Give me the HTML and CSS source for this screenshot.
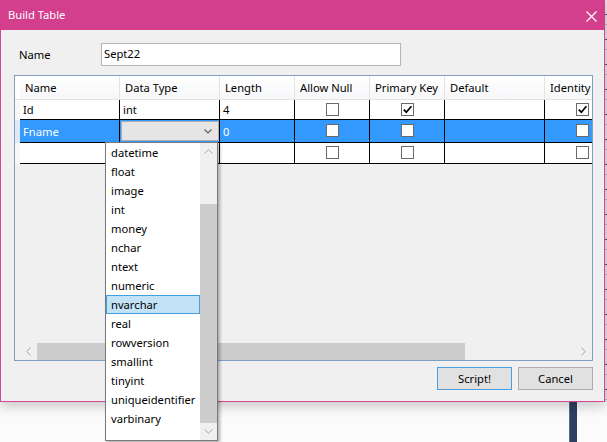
FILE: index.html
```html
<!DOCTYPE html>
<html>
<head>
<meta charset="utf-8">
<title>Build Table</title>
<link rel="stylesheet" href="styles.css">
</head>
<body>
<div class="screen">
  <div class="top">
    <div class="window">
      <div class="titlebar">
        <span class="title">Build Table</span>
        <svg class="close" width="11" height="11" viewBox="0 0 11 11"><path d="M0.5 0.5 L10.5 10.5 M10.5 0.5 L0.5 10.5" stroke="#fff" stroke-width="1.2" fill="none"/></svg>
      </div>
      <div class="content">
        <div class="name-row">
          <span class="name-label">Name</span>
          <div class="textbox">Sept22</div>
        </div>
        <div class="grid">
          <div class="rows">
            <div class="row hdr">
              <div class="rh"></div>
              <div class="cell w100">Name</div>
              <div class="cell w100">Data Type</div>
              <div class="cell w75">Length</div>
              <div class="cell w75">Allow Null</div>
              <div class="cell w75">Primary Key</div>
              <div class="cell w100">Default</div>
              <div class="cell w75">Identity</div>
            </div>
            <div class="row data r1">
              <div class="rh"></div>
              <div class="cell w100">Id</div>
              <div class="cell w100">int</div>
              <div class="cell w75">4</div>
              <div class="cell w75 ck"><span class="cb"></span></div>
              <div class="cell w75 ck"><span class="cb"><svg width="11" height="11" viewBox="0 0 11 11"><path d="M1.8 5.6 L4.3 8.2 L9.4 2.2" stroke="#000" stroke-width="1.7" fill="none"/></svg></span></div>
              <div class="cell w100"></div>
              <div class="cell w75 ck"><span class="cb"><svg width="11" height="11" viewBox="0 0 11 11"><path d="M1.8 5.6 L4.3 8.2 L9.4 2.2" stroke="#000" stroke-width="1.7" fill="none"/></svg></span></div>
            </div>
            <div class="row data r2 sel">
              <div class="rh"></div>
              <div class="cell w100">Fname</div>
              <div class="cell w100 combo-cell">
                <div class="combo">
                  <svg width="8" height="5" viewBox="0 0 8 5"><path d="M0.5 0.5 L4 4 L7.5 0.5" stroke="#5a5a5a" stroke-width="1.1" fill="none"/></svg>
                </div>
              </div>
              <div class="cell w75">0</div>
              <div class="cell w75 ck"><span class="cb"></span></div>
              <div class="cell w75 ck"><span class="cb"></span></div>
              <div class="cell w100"></div>
              <div class="cell w75 ck"><span class="cb"></span></div>
            </div>
            <div class="row data r3">
              <div class="rh"></div>
              <div class="cell w100"></div>
              <div class="cell w100"></div>
              <div class="cell w75"></div>
              <div class="cell w75 ck"><span class="cb"></span></div>
              <div class="cell w75 ck"><span class="cb"></span></div>
              <div class="cell w100"></div>
              <div class="cell w75 ck"><span class="cb"></span></div>
            </div>
          </div>
          <div class="hscroll">
            <div class="hbtn"><svg width="5" height="9" viewBox="0 0 5 9"><path d="M4.5 0.5 L0.8 4.5 L4.5 8.5" stroke="#a6a6a6" stroke-width="1" fill="none"/></svg></div>
            <div class="htrack"><div class="hthumb"></div></div>
            <div class="hbtn"><svg width="5" height="9" viewBox="0 0 5 9"><path d="M0.5 0.5 L4.2 4.5 L0.5 8.5" stroke="#a6a6a6" stroke-width="1" fill="none"/></svg></div>
          </div>
        </div>
        <div class="buttons">
          <div class="btn default">Script!</div>
          <div class="btn">Cancel</div>
        </div>
      </div>
    </div>
    <div class="edge"></div>
  </div>
  <div class="below">
    <div class="navy"></div>
  </div>

  <div class="dropdown">
    <div class="list">
      <div class="item">datetime</div>
      <div class="item">float</div>
      <div class="item">image</div>
      <div class="item">int</div>
      <div class="item">money</div>
      <div class="item">nchar</div>
      <div class="item">ntext</div>
      <div class="item">numeric</div>
      <div class="item hl">nvarchar</div>
      <div class="item">real</div>
      <div class="item">rowversion</div>
      <div class="item">smallint</div>
      <div class="item">tinyint</div>
      <div class="item">uniqueidentifier</div>
      <div class="item">varbinary</div>
    </div>
    <div class="vscroll">
      <div class="vbtn"><svg width="9" height="5" viewBox="0 0 9 5"><path d="M0.5 4.5 L4.5 0.8 L8.5 4.5" stroke="#a6a6a6" stroke-width="1" fill="none"/></svg></div>
      <div class="vtrack"><div class="vthumb"></div></div>
      <div class="vbtn"><svg width="9" height="5" viewBox="0 0 9 5"><path d="M0.5 0.5 L4.5 4.2 L8.5 0.5" stroke="#a6a6a6" stroke-width="1" fill="none"/></svg></div>
    </div>
  </div>
</div>
</body>
</html>
```

FILE: styles.css
```css
html, body {
  margin: 0;
  padding: 0;
}
body {
  font-family: "Noto Sans", "Open Sans", sans-serif;
  font-size: 11.2px;
  color: #000;
  background: #fbfbfb;
}
.screen {
  position: relative;
  width: 607px;
  height: 442px;
  overflow: hidden;
  background: #fbfbfb;
}
.top {
  display: flex;
  height: 402px;
}
.window {
  width: 605px;
  height: 402px;
  box-sizing: border-box;
  border: 1px solid #d6479a;
  border-top: 0;
  display: flex;
  flex-direction: column;
  box-shadow: 0 4px 12px rgba(0, 0, 0, 0.22);
  position: relative;
  z-index: 1;
  flex: none;
}
.edge {
  width: 2px;
  flex: none;
  background: repeating-linear-gradient(#e6e1e8 0 14px, #5e5570 14px 15px, #e6e1e8 15px 24px, #c9a6c2 24px 25px);
}
.titlebar {
  height: 30px;
  flex: none;
  background: #d33f8d;
  color: #fff;
  display: flex;
  align-items: center;
  justify-content: space-between;
  padding: 0 8px 0 8px;
  margin: 0 -1px;
}
.title {
  font-size: 11.2px;
  line-height: 30px;
}
.close {
  margin-top: 2px;
  display: block;
}
.content {
  flex: 1;
  background: #f0f0f0;
  padding: 13px 11px 11px 13px;
  display: flex;
  flex-direction: column;
}
.name-row {
  display: flex;
  align-items: center;
  height: 23px;
  flex: none;
}
.name-label {
  width: 82px;
  padding-left: 5px;
  line-height: 23px;
}
.textbox {
  width: 300px;
  height: 23px;
  box-sizing: border-box;
  border: 1px solid #b4b4b4;
  background: #fff;
  padding: 0 2px;
  line-height: 19px;
}
.grid {
  margin-top: 9px;
  height: 286px;
  box-sizing: border-box;
  border: 1px solid #7c9fc2;
  background: #f0f0f0;
  display: flex;
  flex-direction: column;
  overflow: hidden;
  flex: none;
}
.rows {
  flex: 1;
  overflow: hidden;
}
.row {
  display: flex;
  box-sizing: border-box;
}
.rh {
  width: 5px;
  flex: none;
}
.cell {
  flex: none;
  box-sizing: border-box;
  white-space: nowrap;
  overflow: hidden;
}
.w100 { width: 100px; }
.w75 { width: 75px; }
.hdr {
  height: 24px;
  background: linear-gradient(#ffffff, #f6f7f9);
  border-bottom: 1px solid #e2e2e2;
}
.hdr .rh {
  background: #ffffff;
}
.hdr .cell {
  border-right: 1px solid #e3e3e3;
  padding-left: 5px;
  line-height: 23px;
}
.data .rh {
  background: #f7f8fa;
}
.data .cell {
  background: #fff;
  border-right: 1px solid #000;
  border-bottom: 1px solid #000;
  padding-left: 3px;
  display: flex;
  align-items: center;
}
.r1 { height: 20px; }
.r2 { height: 23px; }
.r3 { height: 21px; }
.sel .rh {
  background: #dde9f6;
}
.sel .cell {
  background: #3399ff;
  color: #fff;
}
.ck {
  justify-content: center;
  padding-left: 0 !important;
}
.cb {
  width: 13px;
  height: 13px;
  box-sizing: border-box;
  border: 1px solid #6a6a6a;
  background: #fff;
  display: flex;
  align-items: center;
  justify-content: center;
  margin-top: -1px;
}
.cb svg {
  display: block;
}
.combo-cell {
  padding: 0 !important;
  align-items: stretch !important;
}
.combo {
  flex: 1;
  margin: 1px 0 1px 1px;
  box-sizing: border-box;
  border: 1px solid #adadad;
  background: #e5e5e5;
  display: flex;
  align-items: center;
  justify-content: flex-end;
  padding-right: 6px;
}
.combo svg {
  display: block;
}
.hscroll {
  height: 17px;
  flex: none;
  margin-left: 5px;
  display: flex;
}
.hbtn {
  width: 17px;
  flex: none;
  display: flex;
  align-items: center;
  justify-content: center;
}
.htrack {
  flex: 1;
  display: flex;
}
.hthumb {
  width: 428px;
  background: #cdcdcd;
}
.buttons {
  margin-top: 6px;
  display: flex;
  justify-content: flex-end;
  gap: 6px;
  flex: none;
}
.btn {
  width: 75px;
  height: 23px;
  box-sizing: border-box;
  border: 1px solid #adadad;
  background: #e1e1e1;
  display: flex;
  align-items: center;
  justify-content: center;
}
.btn.default {
  border-color: #4a9fe2;
}
.below {
  height: 40px;
  display: flex;
}
.navy {
  margin-left: 569px;
  width: 8px;
  box-sizing: border-box;
  border-left: 1px solid #5a6d8e;
  background: #2d3f5f;
}
.dropdown {
  position: absolute;
  left: 105px;
  top: 142px;
  width: 113px;
  height: 299px;
  box-sizing: border-box;
  border: 1px solid #7a7a7a;
  background: #fff;
  display: flex;
  box-shadow: 2px 2px 3px rgba(0, 0, 0, 0.3);
  z-index: 5;
}
.list {
  width: 94px;
  flex: none;
}
.item {
  height: 19px;
  line-height: 19px;
  padding-left: 5px;
  box-sizing: border-box;
  white-space: nowrap;
}
.item.hl {
  background: #c3e2f6;
  border: 1px solid #3f9fe0;
  padding-left: 4px;
  line-height: 17px;
}
.vscroll {
  width: 17px;
  flex: none;
  background: #f0f0f0;
  display: flex;
  flex-direction: column;
}
.vbtn {
  height: 17px;
  flex: none;
  display: flex;
  align-items: center;
  justify-content: center;
}
.vbtn svg, .hbtn svg {
  display: block;
}
.vtrack {
  flex: 1;
}
.vthumb {
  margin-top: 44px;
  height: 219px;
  background: #cdcdcd;
}
```
